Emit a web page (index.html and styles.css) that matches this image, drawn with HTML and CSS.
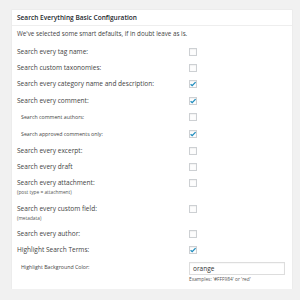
FILE: index.html
```html
<!DOCTYPE html>
<html>
<head>
<meta charset="utf-8">
<link rel="stylesheet" href="styles.css">
</head>
<body>
<div class="panel">
  <div class="head">Search Everything Basic Configuration</div>
  <div class="body">
    <div class="desc">We've selected some smart defaults, if in doubt leave as is.</div>
    <div class="row h16"><div class="label">Search every tag name:</div><span class="cb"></span></div>
    <div class="row h16"><div class="label">Search custom taxonomies:</div><span class="cb"></span></div>
    <div class="row h17"><div class="label">Search every category name and description:</div><span class="cb on"><svg viewBox="0 0 8 8"><path d="M1.6 4.2 L3.2 5.7 L6.6 2.1"/></svg></span></div>
    <div class="row h16"><div class="label">Search every comment:</div><span class="cb on"><svg viewBox="0 0 8 8"><path d="M1.6 4.2 L3.2 5.7 L6.6 2.1"/></svg></span></div>
    <div class="row h17 sub"><div class="label small">Search comment authors:</div><span class="cb"></span></div>
    <div class="row h17 sub"><div class="label small">Search approved comments only:</div><span class="cb on"><svg viewBox="0 0 8 8"><path d="M1.6 4.2 L3.2 5.7 L6.6 2.1"/></svg></span></div>
    <div class="row h16"><div class="label">Search every excerpt:</div><span class="cb"></span></div>
    <div class="row h16"><div class="label">Search every draft</div><span class="cb"></span></div>
    <div class="row h26"><div class="label">Search every attachment:<div class="note">(post type = attachment)</div></div><span class="cb"></span></div>
    <div class="row h25"><div class="label">Search every custom field:<div class="note">(metadata)</div></div><span class="cb"></span></div>
    <div class="row h16"><div class="label">Search every author:</div><span class="cb"></span></div>
    <div class="row h17"><div class="label">Highlight Search Terms:</div><span class="cb on"><svg viewBox="0 0 8 8"><path d="M1.6 4.2 L3.2 5.7 L6.6 2.1"/></svg></span></div>
    <div class="row color sub">
      <div class="label small">Highlight Background Color:</div>
      <div class="field">
        <div class="input">orange</div>
        <div class="hint">Examples: '#FFF984' or 'red'</div>
      </div>
    </div>
  </div>
</div>
</body>
</html>
```
FILE: styles.css
```css
html, body {
  margin: 0;
  padding: 0;
  background: #f1f1f1;
}
body {
  padding: 10px 8px 0 12px;
  font-family: "Open Sans", "Liberation Sans", sans-serif;
  color: #444;
}
.panel {
  width: 280px;
  height: 279px;
  background: #fff;
  box-sizing: border-box;
  box-shadow: 0 0 0 0.5px #e8e8e8;
}
.head {
  height: 16px;
  box-sizing: border-box;
  border-bottom: 1px solid #eeeeee;
  padding: 0 5px;
  font-size: 6.55px;
  font-weight: 600;
  line-height: 15px;
  color: #23282d;
}
.body {
  padding: 0 5px;
}
.desc {
  height: 17px;
  padding-top: 2.5px;
  box-sizing: border-box;
  font-size: 6.25px;
  line-height: 10px;
}
.row {
  display: flex;
  align-items: flex-start;
  box-sizing: border-box;
  padding-top: 3.5px;
}
.h16 { height: 16px; }
.h17 { height: 17px; }
.h25 { height: 25px; }
.h26 { height: 26px; }
.label {
  width: 172px;
  flex: none;
  font-size: 6.55px;
  line-height: 10px;
}
.sub .label { padding-left: 4px; width: 168px; }
.label.small {
  font-size: 5.25px;
}
.note {
  font-size: 4.8px;
  line-height: 8.5px;
  color: #555;
}
.cb {
  flex: none;
  width: 8px;
  height: 8px;
  margin-top: 1px;
  box-sizing: border-box;
  border: 1px solid #cdd0d3;
  background: #fdfdfd;
  box-shadow: inset 0 0.5px 1px rgba(0,0,0,0.08);
  display: block;
  position: relative;
}
.cb svg {
  position: absolute;
  left: -1px;
  top: -1px;
  width: 8px;
  height: 8px;
}
.cb path {
  fill: none;
  stroke: #1e8cbe;
  stroke-width: 1.3;
}
.row.color {
  padding-top: 4px;
}
.field {
  display: flex;
  flex-direction: column;
}
.input {
  width: 96px;
  height: 13px;
  box-sizing: border-box;
  border: 1px solid #dddddd;
  box-shadow: inset 0 0.5px 1px rgba(0,0,0,0.06);
  font-size: 6.5px;
  line-height: 11px;
  padding-left: 3px;
  color: #333;
}
.hint {
  font-size: 4.8px;
  line-height: 9px;
  color: #555;
}
```
